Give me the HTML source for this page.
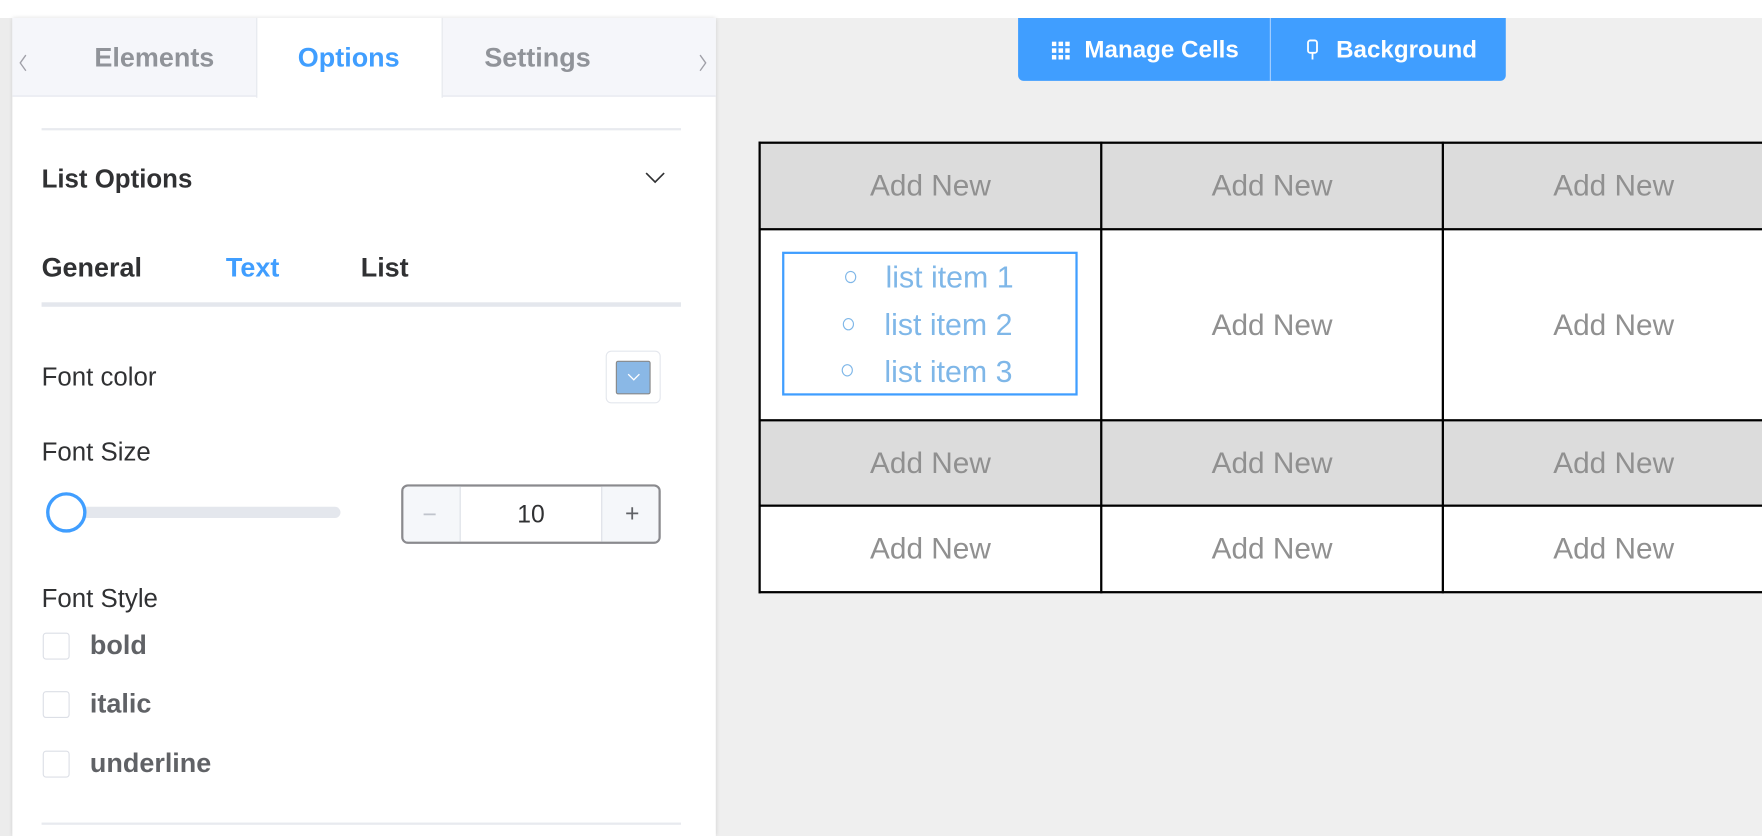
<!DOCTYPE html>
<html><head><meta charset="utf-8"><style>
html,body{margin:0;padding:0;width:1762px;height:836px;overflow:hidden;background:#efefef;font-family:"Liberation Sans",Arial,sans-serif}
#w{position:absolute;left:0;top:0;width:1568px;height:744px;transform:scale(1.12372);transform-origin:0 0;background:#efefef}
.a{position:absolute}
.t{position:absolute;white-space:nowrap}
</style></head><body><div id="w">
<div class="a" style="left:0;top:0;width:1568px;height:16px;background:#fff"></div>
<div class="a" style="left:0;top:16px;width:11px;height:728px;background:#ececec"></div>
<div class="a" style="left:11px;top:16px;width:626px;height:728px;background:#fff;box-shadow:0 0 4px rgba(0,0,0,.15)"></div>
<!-- tabs -->
<div class="a" style="left:11px;top:16px;width:626px;height:70px;background:#f5f6fa;border-bottom:1px solid #e4e7ed;box-sizing:border-box"></div>
<div class="a" style="left:228px;top:16px;width:166px;height:71px;background:#fff;border-left:1px solid #e4e7ed;border-right:1px solid #e4e7ed;box-sizing:border-box"></div>
<svg class="a" style="left:15px;top:47px" width="10" height="18"><path d="M8 2 L3 9 L8 16" fill="none" stroke="#a0a0a8" stroke-width="1.2"/></svg>
<svg class="a" style="left:621px;top:47px" width="10" height="18"><path d="M2 2 L7 9 L2 16" fill="none" stroke="#a0a0a8" stroke-width="1.2"/></svg>
<div class="t" style="left:84px;top:38px;font-size:24px;color:#909399;font-weight:bold">Elements</div>
<div class="t" style="left:265px;top:38px;font-size:24px;color:#409eff;font-weight:bold">Options</div>
<div class="t" style="left:431px;top:38px;font-size:24px;color:#909399;font-weight:bold">Settings</div>
<div class="a" style="left:37px;top:114px;width:569px;height:2px;background:#e8eaef"></div>
<div class="t" style="left:37px;top:146px;font-size:23px;color:#303133;font-weight:bold">List Options</div>
<svg class="a" style="left:574px;top:152px" width="18" height="12"><path d="M1 2 L9 10 L17 2" fill="none" stroke="#303133" stroke-width="1.5"/></svg>
<div class="t" style="left:37px;top:225px;font-size:24px;color:#303133;font-weight:bold">General</div>
<div class="t" style="left:201px;top:225px;font-size:24px;color:#409eff;font-weight:bold">Text</div>
<div class="t" style="left:321px;top:225px;font-size:24px;color:#303133;font-weight:bold">List</div>
<div class="a" style="left:37px;top:269px;width:569px;height:4px;background:#e4e7ed"></div>
<div class="t" style="left:37px;top:322px;font-size:23px;color:#303133">Font color</div>
<div class="a" style="left:539px;top:312px;width:49px;height:47px;border:1px solid #e4e7ed;border-radius:5px;box-sizing:border-box"></div>
<div class="a" style="left:548px;top:321px;width:31px;height:30px;background:#8ab8e6;border:1px solid #888;border-radius:2px;box-sizing:border-box"></div>
<svg class="a" style="left:557px;top:330px" width="14" height="10"><path d="M2 3 L7 8 L12 3" fill="none" stroke="#fff" stroke-width="1.2"/></svg>
<div class="t" style="left:37px;top:389px;font-size:23px;color:#303133">Font Size</div>
<div class="a" style="left:44px;top:451px;width:259px;height:10px;background:#e4e7ed;border-radius:5px"></div>
<div class="a" style="left:41px;top:438px;width:36px;height:36px;border:3px solid #409eff;border-radius:50%;background:#fff;box-sizing:border-box"></div>
<div class="a" style="left:357px;top:431px;width:231px;height:53px;border:2px solid #8a8a8e;border-radius:6px;box-sizing:border-box;overflow:hidden">
<div class="a" style="left:0;top:0;width:50px;height:49px;background:#f5f7fa;border-right:1px solid #dcdfe6"></div>
<div class="a" style="right:0;top:0;width:50px;height:49px;background:#f5f7fa;border-left:1px solid #dcdfe6"></div>
<div class="t" style="left:17px;top:12px;font-size:22px;color:#c0c4cc">−</div>
<div class="t" style="right:17px;top:11px;font-size:22px;color:#606266">+</div>
<div class="t" style="left:0;width:227px;text-align:center;top:12px;font-size:22px;color:#303133">10</div>
</div>
<div class="t" style="left:37px;top:519px;font-size:23px;color:#303133">Font Style</div>
<div class="a" style="left:38px;top:563px;width:24px;height:24px;border:1px solid #dcdfe6;border-radius:3px;box-sizing:border-box"></div>
<div class="a" style="left:38px;top:615px;width:24px;height:24px;border:1px solid #dcdfe6;border-radius:3px;box-sizing:border-box"></div>
<div class="a" style="left:38px;top:668px;width:24px;height:24px;border:1px solid #dcdfe6;border-radius:3px;box-sizing:border-box"></div>
<div class="t" style="left:80px;top:561px;font-size:24px;color:#606266;font-weight:bold">bold</div>
<div class="t" style="left:80px;top:613px;font-size:24px;color:#606266;font-weight:bold">italic</div>
<div class="t" style="left:80px;top:666px;font-size:24px;color:#606266;font-weight:bold">underline</div>
<div class="a" style="left:37px;top:732px;width:569px;height:2px;background:#e8eaef"></div>
<!-- buttons -->
<div class="a" style="left:906px;top:16px;width:434px;height:56px;background:#409eff;border-radius:0 0 5px 5px"></div>
<div class="a" style="left:1130px;top:16px;width:1px;height:56px;background:#a8d0ff"></div>
<svg class="a" style="left:936px;top:37px" width="16" height="16" fill="#fff"><rect x="0" y="0" width="4" height="4"/><rect x="6" y="0" width="4" height="4"/><rect x="12" y="0" width="4" height="4"/><rect x="0" y="6" width="4" height="4"/><rect x="6" y="6" width="4" height="4"/><rect x="12" y="6" width="4" height="4"/><rect x="0" y="12" width="4" height="4"/><rect x="6" y="12" width="4" height="4"/><rect x="12" y="12" width="4" height="4"/></svg>
<div class="t" style="left:965px;top:32px;font-size:21.5px;color:#fff;font-weight:bold">Manage Cells</div>
<svg class="a" style="left:1162px;top:35px" width="12" height="20"><rect x="2" y="1" width="8" height="11" rx="2" fill="none" stroke="#fff" stroke-width="1.6"/><path d="M6 12 V18" stroke="#fff" stroke-width="1.6"/></svg>
<div class="t" style="left:1189px;top:32px;font-size:21.5px;color:#fff;font-weight:bold">Background</div>
<!-- table -->
<div class="a" style="left:675px;top:127px;width:900px;height:77px;background:#dcdcdc"></div>
<div class="a" style="left:675px;top:204px;width:900px;height:170px;background:#fff"></div>
<div class="a" style="left:675px;top:374px;width:900px;height:76px;background:#dcdcdc"></div>
<div class="a" style="left:675px;top:450px;width:900px;height:77px;background:#fff"></div>
<div class="a" style="left:675px;top:126px;width:900px;height:2px;background:#000"></div>
<div class="a" style="left:675px;top:203px;width:900px;height:2px;background:#000"></div>
<div class="a" style="left:675px;top:373px;width:900px;height:2px;background:#000"></div>
<div class="a" style="left:675px;top:449px;width:900px;height:2px;background:#000"></div>
<div class="a" style="left:675px;top:526px;width:900px;height:2px;background:#000"></div>
<div class="a" style="left:675px;top:126px;width:2px;height:402px;background:#000"></div>
<div class="a" style="left:979px;top:126px;width:2px;height:402px;background:#000"></div>
<div class="a" style="left:1283px;top:126px;width:2px;height:402px;background:#000"></div>
<div style="font-size:26.5px;color:#909090">
<div class="t" style="left:677px;width:302px;text-align:center;top:150px">Add New</div>
<div class="t" style="left:981px;width:302px;text-align:center;top:150px">Add New</div>
<div class="t" style="left:1285px;width:302px;text-align:center;top:150px">Add New</div>
<div class="t" style="left:981px;width:302px;text-align:center;top:274px">Add New</div>
<div class="t" style="left:1285px;width:302px;text-align:center;top:274px">Add New</div>
<div class="t" style="left:677px;width:302px;text-align:center;top:397px">Add New</div>
<div class="t" style="left:981px;width:302px;text-align:center;top:397px">Add New</div>
<div class="t" style="left:1285px;width:302px;text-align:center;top:397px">Add New</div>
<div class="t" style="left:677px;width:302px;text-align:center;top:473px">Add New</div>
<div class="t" style="left:981px;width:302px;text-align:center;top:473px">Add New</div>
<div class="t" style="left:1285px;width:302px;text-align:center;top:473px">Add New</div>
</div>
<div class="a" style="left:696px;top:224px;width:263px;height:128px;border:2px solid #409eff;box-sizing:border-box"></div>
<div style="font-size:27px;color:#7fb7e8">
<div class="a" style="left:752px;top:241px;width:8px;height:9px;border:1px solid #7fb7e8;border-radius:50%"></div>
<div class="a" style="left:750px;top:283px;width:8px;height:9px;border:1px solid #7fb7e8;border-radius:50%"></div>
<div class="a" style="left:749px;top:324px;width:8px;height:9px;border:1px solid #7fb7e8;border-radius:50%"></div>
<div class="t" style="left:788px;top:232px">list item 1</div>
<div class="t" style="left:787px;top:274px">list item 2</div>
<div class="t" style="left:787px;top:316px">list item 3</div>
</div>
</div></body></html>
